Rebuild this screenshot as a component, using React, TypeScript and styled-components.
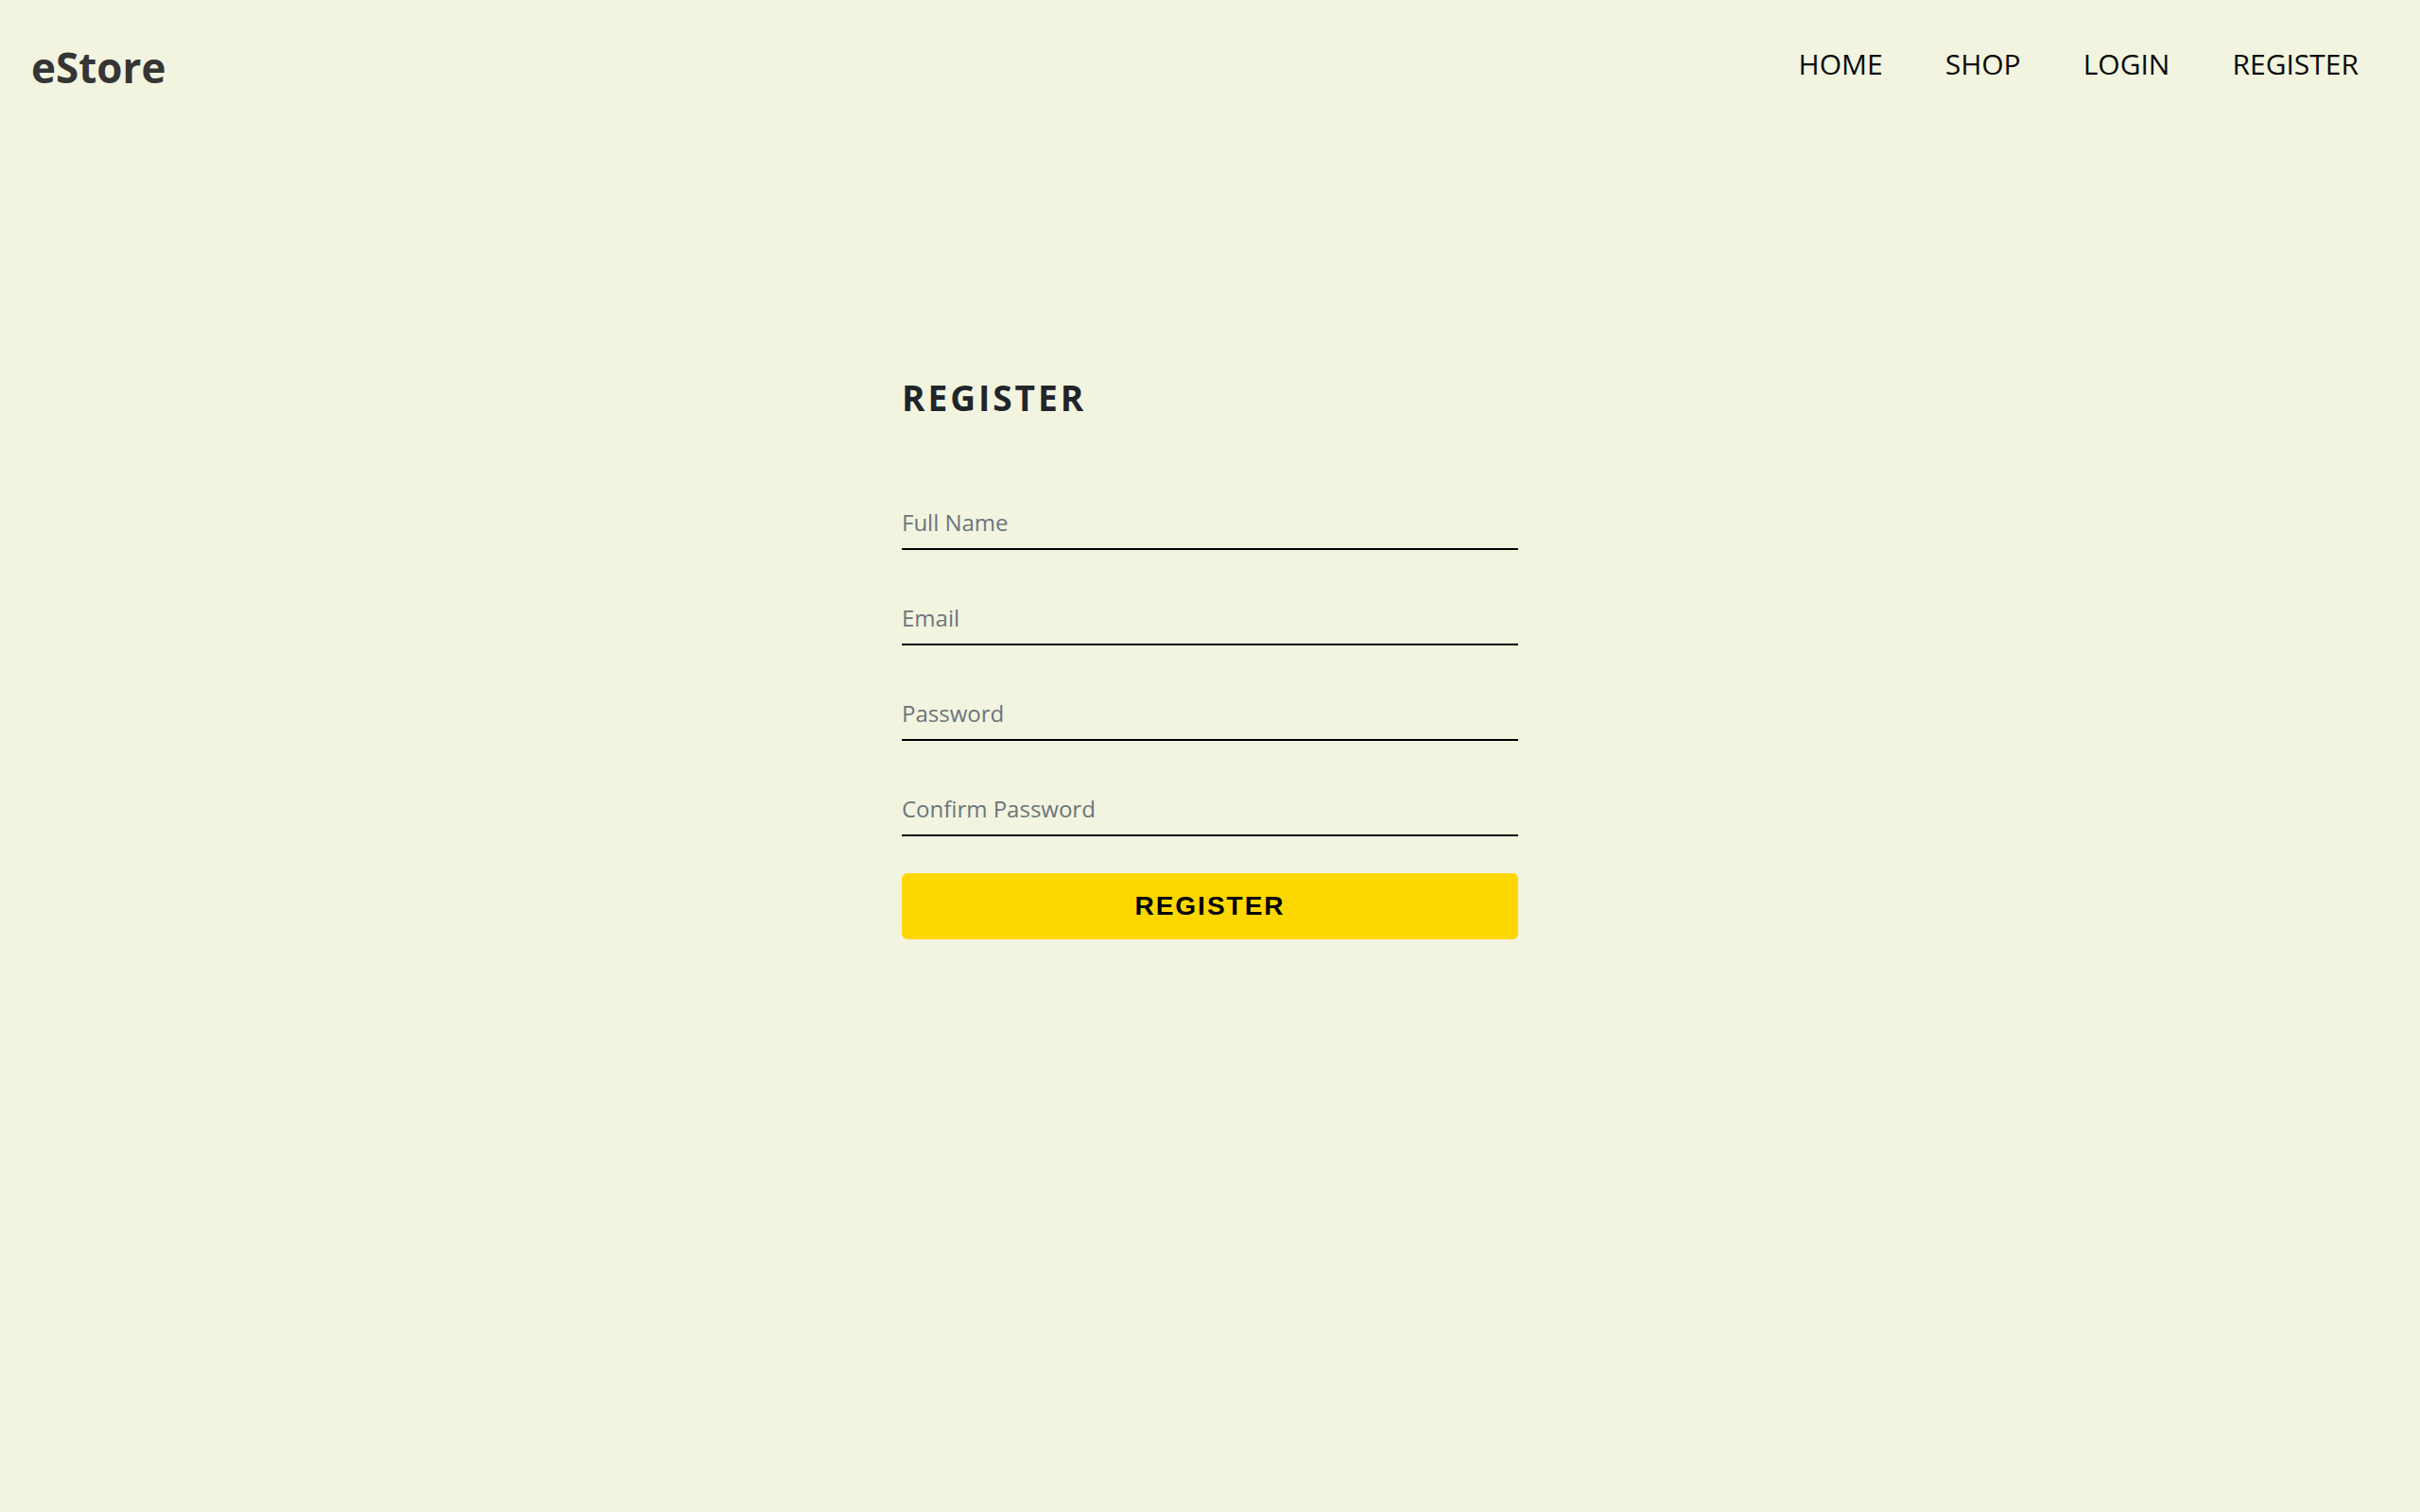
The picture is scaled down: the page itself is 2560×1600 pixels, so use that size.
import React from 'react';
import styled, { createGlobalStyle } from 'styled-components';

// 全局样式
const GlobalStyle = createGlobalStyle`
  html, body {
    margin: 0;
    padding: 0;
    background-color: #f2f4df;
  }
  body {
    font-family: 'Open Sans', 'Noto Sans', sans-serif;
    color: #212529;
  }
  * {
    box-sizing: border-box;
  }
`;

const Page = styled.div`
  min-height: 100vh;
  background-color: #f2f4df;
`;

const Header = styled.header`
  display: flex;
  align-items: center;
  justify-content: space-between;
  height: 136px;
  padding: 0 32px 0 33px;
`;

const Logo = styled.a`
  padding-top: 6px;
  font-size: 44px;
  line-height: 1;
  font-weight: 700;
  color: #353535;
  text-decoration: none;
  cursor: pointer;
`;

const Nav = styled.nav`
  display: flex;
  align-items: center;
`;

const NavLink = styled.a`
  padding: 0 33px;
  font-size: 30px;
  line-height: 1;
  color: #0a0a0a;
  text-decoration: none;
  cursor: pointer;
`;

const Main = styled.main`
  display: flex;
  justify-content: center;
  padding-top: 266px;
`;

const Form = styled.form`
  width: 652px;
  display: flex;
  flex-direction: column;
`;

const Title = styled.h2`
  margin: 0 0 85px;
  font-size: 37px;
  line-height: 1;
  font-weight: 700;
  letter-spacing: 3px;
  color: #212529;
`;

const Input = styled.input`
  display: block;
  width: 100%;
  height: 58px;
  margin: 0 0 43px;
  padding: 0;
  border: none;
  border-bottom: 2px solid #000;
  background: transparent;
  font-family: 'Open Sans', 'Noto Sans', sans-serif;
  font-size: 24px;
  color: #212529;
  outline: none;

  &::placeholder {
    color: #6c757d;
  }

  &:last-of-type {
    margin-bottom: 39px;
  }
`;

const SubmitButton = styled.button`
  width: 100%;
  height: 70px;
  border: none;
  border-radius: 6px;
  background-color: #ffd700;
  color: #000;
  font-family: 'Liberation Sans', Arial, sans-serif;
  font-size: 28px;
  font-weight: 700;
  letter-spacing: 2px;
  cursor: pointer;

  &:hover {
    background-color: #f5cf00;
  }
`;

const fields = [
  { type: 'text', placeholder: 'Full Name' },
  { type: 'email', placeholder: 'Email' },
  { type: 'password', placeholder: 'Password' },
  { type: 'password', placeholder: 'Confirm Password' },
];

function App() {
  return (
    <Page>
      <GlobalStyle />
      <Header>
        <Logo>eStore</Logo>
        <Nav>
          <NavLink>HOME</NavLink>
          <NavLink>SHOP</NavLink>
          <NavLink>LOGIN</NavLink>
          <NavLink>REGISTER</NavLink>
        </Nav>
      </Header>
      <Main>
        <Form onSubmit={(e) => e.preventDefault()}>
          <Title>REGISTER</Title>
          {fields.map((f) => (
            <Input key={f.placeholder} type={f.type} placeholder={f.placeholder} />
          ))}
          <SubmitButton type="submit">REGISTER</SubmitButton>
        </Form>
      </Main>
    </Page>
  );
}

export default App;
